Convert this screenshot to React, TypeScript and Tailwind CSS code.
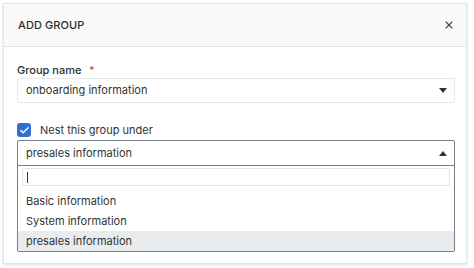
import { Check, X } from 'lucide-react';

const options = ['Basic information', 'System information', 'presales information'];

function Caret({ up }: { up?: boolean }) {
  return (
    <svg width="8" height="5" viewBox="0 0 8 5" className="shrink-0">
      {up ? <path d="M0 5 L4 0 L8 5 Z" fill="#333" /> : <path d="M0 0 L8 0 L4 5 Z" fill="#333" />}
    </svg>
  );
}

export default function App() {
  return (
    <div className="w-[474px] h-[268px] bg-white pt-[3px] pl-[3px] font-['Inter','Liberation_Sans',sans-serif] text-[11px] text-[#333]">
      <div className="w-[464px] h-[261px] border border-[#e3e3e3] bg-white shadow-[0_1px_3px_rgba(0,0,0,0.12)]">
        <div className="h-[43px] bg-[#f9f9f9] border-b border-[#e3e3e3] flex items-center justify-between pl-[14px] pr-[11px]">
          <span className="text-[11px] font-medium tracking-[0.1px] text-[#2d2d2d]">ADD GROUP</span>
          <X className="w-[12px] h-[12px] text-[#444]" strokeWidth={2.2} />
        </div>
        <div className="px-[13px] pt-[16px]">
          <div className="flex items-center gap-[8px] h-[14px] font-medium text-[#2d2d2d]">
            Group name <span className="text-[#d23b3b] text-[10px]">*</span>
          </div>
          <div className="mt-[1px] w-[438px] h-[25px] border border-[#e8e8e8] rounded-[2px] flex items-center justify-between pl-[8px] pr-[7px]">
            <span>onboarding information</span>
            <Caret />
          </div>
          <div className="mt-[20px] flex items-center gap-[9px] h-[14px]">
            <span className="w-[14px] h-[14px] rounded-[3px] bg-[#2f6fd6] flex items-center justify-center">
              <Check className="w-[11px] h-[11px] text-white" strokeWidth={3} />
            </span>
            <span>Nest this group under</span>
          </div>
          <div className="mt-[3px] w-[438px] border border-[#737f8a] rounded-[2px]">
            <div className="h-[25px] border-b border-[#737f8a] flex items-center justify-between pl-[8px] pr-[7px]">
              <span>presales information</span>
              <Caret up />
            </div>
            <div className="px-[4px] pt-[2px] pb-[5px]">
              <div className="h-[18px] border border-[#e6e6e6] flex items-center pl-[4px]">
                <span className="w-[1px] h-[11px] bg-[#333]" />
              </div>
            </div>
            {options.map((o, i) => (
              <div
                key={o}
                className={`h-[20px] flex items-center pl-[8px] ${i === options.length - 1 ? 'bg-[#e9ecef]' : ''}`}
              >
                {o}
              </div>
            ))}
          </div>
        </div>
      </div>
    </div>
  );
}
